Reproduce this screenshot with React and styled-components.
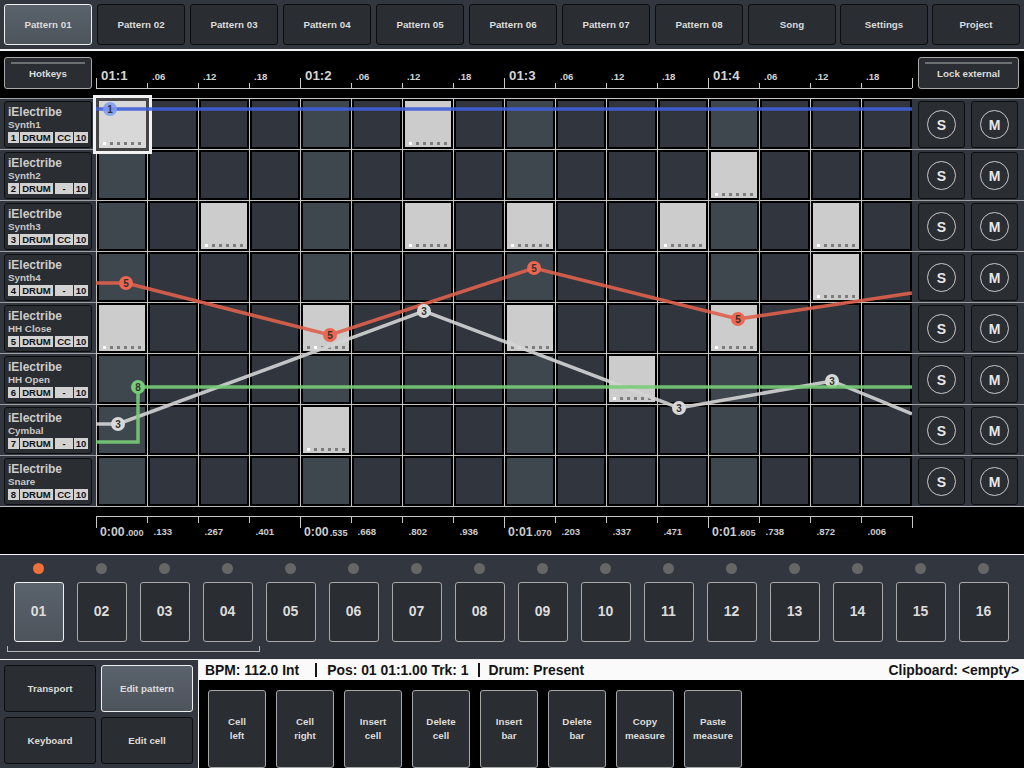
import React from "react";
import styled, { createGlobalStyle } from "styled-components";

const TRACKS = [
  { name: "Synth1", cc: "CC", filled: [0, 6] },
  { name: "Synth2", cc: "-", filled: [12] },
  { name: "Synth3", cc: "CC", filled: [2, 6, 8, 11, 14] },
  { name: "Synth4", cc: "-", filled: [14] },
  { name: "HH Close", cc: "CC", filled: [0, 4, 8, 12], shifted: [4, 8] },
  { name: "HH Open", cc: "-", filled: [10] },
  { name: "Cymbal", cc: "-", filled: [4] },
  { name: "Snare", cc: "CC", filled: [] },
];

const TABS = ["Pattern 01", "Pattern 02", "Pattern 03", "Pattern 04", "Pattern 05", "Pattern 06", "Pattern 07", "Pattern 08", "Song", "Settings", "Project"];
const TOP_TICKS = ["01:1", ".06", ".12", ".18", "01:2", ".06", ".12", ".18", "01:3", ".06", ".12", ".18", "01:4", ".06", ".12", ".18"];
const TIME_TICKS = [
  ["0:00", ".000"], ["", ".133"], ["", ".267"], ["", ".401"],
  ["0:00", ".535"], ["", ".668"], ["", ".802"], ["", ".936"],
  ["0:01", ".070"], ["", ".203"], ["", ".337"], ["", ".471"],
  ["0:01", ".605"], ["", ".738"], ["", ".872"], ["", ".006"],
];
const COMMANDS = [["Cell", "left"], ["Cell", "right"], ["Insert", "cell"], ["Delete", "cell"], ["Insert", "bar"], ["Delete", "bar"], ["Copy", "measure"], ["Paste", "measure"]];

// coordinates relative to the grid's top left corner
const CURVES = [
  { color: "#3f5fd8", points: "0,11 816,11", dots: [{ x: 14, y: 11, n: 1, fill: "#7f9bf5" }] },
  { color: "#e0604c", points: "0,185 30,185 234,237 438,170 642,221 816,195", dots: [
    { x: 30, y: 185, n: 5, fill: "#ec6650" }, { x: 234, y: 237, n: 5, fill: "#ec6650" },
    { x: 438, y: 170, n: 5, fill: "#ec6650" }, { x: 642, y: 221, n: 5, fill: "#ec6650" },
  ] },
  { color: "#d4d4d4", points: "0,326 22,326 328,213 583,310 736,283 816,316", dots: [
    { x: 22, y: 326, n: 3, fill: "#d8d8d8" }, { x: 328, y: 213, n: 3, fill: "#d8d8d8" },
    { x: 583, y: 310, n: 3, fill: "#d8d8d8" }, { x: 736, y: 283, n: 3, fill: "#d8d8d8" },
  ] },
  { color: "#78cc78", points: "0,344 42,344 42,289 816,289", dots: [{ x: 42, y: 289, n: 8, fill: "#78cc78" }] },
];

const GlobalStyle = createGlobalStyle`
  html, body {
    margin: 0;
    padding: 0;
    background: #000;
  }
  * {
    box-sizing: border-box;
  }
`;

const Page = styled.div`
  width: 1024px;
  height: 768px;
  overflow: hidden;
  display: flex;
  flex-direction: column;
  background: #000;
  font-family: "Liberation Sans", Arial, sans-serif;
  font-weight: 700;
  color: #e0e0e0;
`;

const Button = styled.div`
  display: flex;
  flex-direction: column;
  align-items: center;
  justify-content: center;
  border-radius: 3px;
  border: 1px solid ${({ $active, $outlined }) => ($active ? "#f0f0f0" : $outlined ? "#a8a8a8" : "#0c0d0e")};
  background: ${({ $active }) => ($active ? "linear-gradient(#5a626b, #4d545c)" : "#2a2d31")};
  font-size: 9.75px;
  color: #dcdcdc;
`;

const TabBar = styled.div`
  height: 49px;
  padding: 4px;
  display: flex;
  gap: 5px;
  background: #32363e;
`;

const Tab = styled(Button)`
  width: 88px;
  flex: none;
  height: 41px;
  margin-left: ${({ $tight }) => ($tight ? "-1px" : "0")};
`;

const WhiteLine = styled.div`
  height: ${({ $thin }) => ($thin ? "1px" : "2px")};
  background: #f4f4f4;
  flex: none;
`;

const RulerRow = styled.div`
  height: 47px;
  display: flex;
  flex: none;
`;

const Corner = styled.div`
  width: 96px;
  padding: 6px 4px 0;
  flex: none;
`;

const RightCorner = styled(Corner)`
  width: 112px;
  padding: 6px 5px 0 6px;
`;

const LedButton = styled(Button)`
  height: 32px;
  justify-content: flex-start;
  border-color: #a8a8a8;
  padding: 4px 6px 0;

  &::before {
    content: "";
    display: block;
    width: 100%;
    height: 2px;
    background: #6c6f73;
    margin-bottom: 4px;
  }
`;

const TopRuler = styled.div`
  width: 816px;
  height: 32px;
  margin-top: 6px;
  display: flex;
  border-bottom: 1px solid #c8c8c8;
  flex: none;
  align-items: flex-end;
`;

const TopTick = styled.div`
  width: ${({ $end }) => ($end ? "1px" : "51px")};
  flex: none;
  height: ${({ $major }) => ($major ? "10px" : "5px")};
  border-left: 1px solid #c8c8c8;
  position: relative;
`;

const TickLabel = styled.span`
  position: absolute;
  left: 4px;
  bottom: ${({ $major }) => ($major ? "5px" : "6px")};
  font-size: ${({ $major }) => ($major ? "13.3px" : "9.6px")};
  color: #d4d4d4;
  white-space: nowrap;
`;

const GridArea = styled.div`
  display: flex;
  flex: none;
  height: 409px;
  border-bottom: 1px solid #bcbcbc;
`;

const SideColumn = styled.div`
  width: ${({ $wide }) => ($wide ? "112px" : "96px")};
  flex: none;
  background: #32363e;
  display: flex;
  flex-direction: column;
`;

const SideRow = styled.div`
  height: 51px;
  flex: none;
  border-top: 1px solid #9ea0a3;
  padding: ${({ $wide }) => ($wide ? "2px 5px 2px 6px" : "2px 4px")};
  display: flex;
  gap: 6px;
`;

const TrackBox = styled.div`
  width: 88px;
  height: 47px;
  border: 1px solid #0c0d0e;
  border-radius: 3px;
  background: #2a2d31;
  padding: 4px 3px 0;
  display: flex;
  flex-direction: column;
`;

const TrackDevice = styled.div`
  font-size: 12px;
  line-height: 13px;
  color: #cccccc;
`;

const TrackName = styled.div`
  font-size: 9.8px;
  line-height: 12px;
  color: #c8c8c8;
`;

const TagRow = styled.div`
  display: flex;
  gap: 1px;
  margin-top: 1px;
`;

const Tag = styled.div`
  width: ${({ $w }) => $w}px;
  height: 11px;
  margin-left: ${({ $offset }) => $offset || 0}px;
  background: #d2d2d2;
  color: #111;
  font-size: 9.5px;
  line-height: 11px;
  text-align: center;
  flex: none;
`;

const Grid = styled.div`
  width: 816px;
  flex: none;
  position: relative;
  display: grid;
  grid-template-columns: repeat(16, 51px);
  grid-auto-rows: 51px;
  background: #000;
`;

const CellSlot = styled.div`
  border-top: 1px solid #c4c4c4;
  border-left: 1px solid #c4c4c4;
  padding: 2px;
`;

const Cell = styled.div`
  position: relative;
  height: 100%;
  background: ${({ $on, $bar }) => ($on ? "#cccccc" : $bar ? "#3e464e" : "#31363e")};
`;

const Selected = styled.div`
  position: absolute;
  left: -6px;
  top: -6px;
  width: 59px;
  height: 59px;
  border: 3px solid #f2f2f2;
  background: #d8d8d8;
  box-shadow: inset 0 0 0 3px #444;
  z-index: 1;
`;

const Dots = styled.div`
  position: absolute;
  left: ${({ $inset }) => $inset}px;
  bottom: 2px;
  display: flex;
  gap: 4px;
  z-index: 2;
`;

const Dot = styled.i`
  display: block;
  width: 3px;
  height: 3px;
  background: ${({ $on }) => ($on ? "#fff" : "#7c7c7c")};
`;

const Overlay = styled.svg`
  position: absolute;
  left: 0;
  top: 0;
  z-index: 3;
  pointer-events: none;
  font-family: "Liberation Sans", Arial, sans-serif;
`;

const RoundButton = styled(Button)`
  width: 47px;
  height: 47px;
  border-color: #0c0d0e;
`;

const Ring = styled.div`
  width: 29px;
  height: 29px;
  border-radius: 50%;
  border: 1.5px solid #c8c8c8;
  display: flex;
  align-items: center;
  justify-content: center;
  font-size: 14px;
  color: #e8e8e8;
`;

const TimeRow = styled.div`
  height: 47px;
  flex: none;
  padding: 9px 0 0 96px;
`;

const TimeRuler = styled.div`
  width: 817px;
  height: 11px;
  display: flex;
  border-top: 1px solid #c8c8c8;
`;

const TimeTick = styled.div`
  width: ${({ $end }) => ($end ? "1px" : "51px")};
  flex: none;
  height: ${({ $major }) => ($major ? "11px" : "6px")};
  border-left: 1px solid #c8c8c8;
  position: relative;
`;

const TimeLabel = styled.span`
  position: absolute;
  left: ${({ $major }) => ($major ? "3px" : "5.5px")};
  top: ${({ $major }) => ($major ? "8px" : "9px")};
  white-space: nowrap;
  font-size: ${({ $major }) => ($major ? "9.2px" : "9.6px")};
  color: #cccccc;

  b {
    font-size: 12.3px;
    margin-right: 1px;
  }
`;

const StepPanel = styled.div`
  height: 104px;
  flex: none;
  background: #32363e;
  padding: 0 14px;
  position: relative;
`;

const StepColumns = styled.div`
  display: grid;
  grid-template-columns: repeat(16, 49px);
  column-gap: 14px;
`;

const StepColumn = styled.div`
  display: flex;
  flex-direction: column;
  align-items: center;
`;

const Led = styled.div`
  width: 11px;
  height: 11px;
  margin: 8px 0;
  border-radius: 50%;
  background: ${({ $on }) => ($on ? "#f0703a" : "#666666")};
`;

const StepButton = styled(Button)`
  width: 50px;
  height: 60px;
  padding-bottom: 2px;
  font-size: 14px;
`;

const Bracket = styled.div`
  position: absolute;
  left: 7px;
  top: 91px;
  width: 253px;
  height: 6px;
  border: 1px solid #b4b4b4;
  border-top: 0;
`;

const Bottom = styled.div`
  flex: 1;
  display: flex;
  min-height: 0;
  border-top: 1px solid #f0f0f0;
`;

const ModeGrid = styled.div`
  width: 199px;
  flex: none;
  background: #32363e;
  border-right: 1px solid #f0f0f0;
  padding: 5px 5px 4px 4px;
  display: grid;
  grid-template-columns: 92px 92px;
  grid-auto-rows: 47px;
  gap: 5px;
`;

const EditPanel = styled.div`
  flex: 1;
  display: flex;
  flex-direction: column;
  min-width: 0;
`;

const StatusBar = styled.div`
  height: 20px;
  flex: none;
  background: #fafafa;
  color: #141414;
  padding: 0 5px 0 6px;
  display: flex;
  align-items: center;
  font-size: 13.9px;
`;

const StatusItem = styled.span`
  white-space: pre;
`;

const StatusDivider = styled.span`
  width: 2px;
  height: 14px;
  background: #141414;
  margin: 0 ${({ $after }) => $after}px 0 ${({ $before }) => $before}px;
`;

const Clipboard = styled(StatusItem)`
  margin-left: auto;
`;

const CommandRow = styled.div`
  display: flex;
  gap: 10px;
  padding: 10px 0 0 9px;
`;

const CommandButton = styled(Button)`
  width: 58px;
  height: 78px;
  padding-bottom: 1px;
  line-height: 14px;
`;

export default function App() {
  return (
    <Page>
      <GlobalStyle />
      <TabBar>
        {TABS.map((t, i) => (
          <Tab key={t} $active={i === 0} $tight={i > 8}>{t}</Tab>
        ))}
      </TabBar>
      <WhiteLine />
      <RulerRow>
        <Corner>
          <LedButton>Hotkeys</LedButton>
        </Corner>
        <TopRuler>
          {TOP_TICKS.map((t, i) => (
            <TopTick key={i} $major={i % 4 === 0}>
              <TickLabel $major={i % 4 === 0}>{t}</TickLabel>
            </TopTick>
          ))}
          <TopTick $major $end />
        </TopRuler>
        <RightCorner>
          <LedButton>Lock external</LedButton>
        </RightCorner>
      </RulerRow>
      <GridArea>
        <SideColumn>
          {TRACKS.map((track, i) => (
            <SideRow key={track.name}>
              <TrackBox>
                <TrackDevice>iElectribe</TrackDevice>
                <TrackName>{track.name}</TrackName>
                <TagRow>
                  <Tag $w={11}>{i + 1}</Tag>
                  <Tag $w={33}>DRUM</Tag>
                  <Tag $w={18} $offset={1}>{track.cc}</Tag>
                  <Tag $w={14}>10</Tag>
                </TagRow>
              </TrackBox>
            </SideRow>
          ))}
        </SideColumn>
        <Grid>
          {TRACKS.map((track, r) =>
            Array.from({ length: 16 }).map((_, c) => {
              const on = track.filled.includes(c);
              const selected = r === 0 && c === 0;
              const lit = track.shifted && track.shifted.includes(c) ? 1 : 0;
              return (
                <CellSlot key={`${r}-${c}`}>
                  <Cell $on={on} $bar={c % 4 === 0}>
                    {selected && <Selected />}
                    {on && (
                      <Dots $inset={4}>
                        {[0, 1, 2, 3, 4, 5].map((d) => (
                          <Dot key={d} $on={d === lit} />
                        ))}
                      </Dots>
                    )}
                  </Cell>
                </CellSlot>
              );
            })
          )}
          <Overlay width="816" height="408" viewBox="0 0 816 408">
            {CURVES.map((curve) => (
              <g key={curve.color}>
                <polyline points={curve.points} fill="none" stroke={curve.color} strokeWidth="3.5" strokeOpacity="0.9" />
                {curve.dots.map((d) => (
                  <g key={d.x}>
                    <circle cx={d.x} cy={d.y} r="7" fill={d.fill} fillOpacity={d.n === 1 ? 0.85 : 1} />
                    <text x={d.x} y={d.y + 3.5} textAnchor="middle" fontSize="10" fontWeight="700" fill="#333">
                      {d.n}
                    </text>
                  </g>
                ))}
              </g>
            ))}
          </Overlay>
        </Grid>
        <SideColumn $wide>
          {TRACKS.map((track) => (
            <SideRow key={track.name} $wide>
              <RoundButton><Ring>S</Ring></RoundButton>
              <RoundButton><Ring>M</Ring></RoundButton>
            </SideRow>
          ))}
        </SideColumn>
      </GridArea>
      <TimeRow>
        <TimeRuler>
          {TIME_TICKS.map(([major, minor], i) => (
            <TimeTick key={i} $major={i % 4 === 0}>
              <TimeLabel $major={i % 4 === 0}>
                {major && <b>{major}</b>}
                {minor}
              </TimeLabel>
            </TimeTick>
          ))}
          <TimeTick $major $end />
        </TimeRuler>
      </TimeRow>
      <WhiteLine $thin />
      <StepPanel>
        <StepColumns>
          {Array.from({ length: 16 }).map((_, i) => (
            <StepColumn key={i}>
              <Led $on={i === 0} />
              <StepButton $outlined $active={i === 0}>{String(i + 1).padStart(2, "0")}</StepButton>
            </StepColumn>
          ))}
        </StepColumns>
        <Bracket />
      </StepPanel>
      <Bottom>
        <ModeGrid>
          <Button>Transport</Button>
          <Button $active>Edit pattern</Button>
          <Button>Keyboard</Button>
          <Button>Edit cell</Button>
        </ModeGrid>
        <EditPanel>
          <StatusBar>
            <StatusItem>BPM: 112.0 Int</StatusItem>
            <StatusDivider $before={16} $after={10} />
            <StatusItem>Pos: 01 01:1.00 Trk: 1</StatusItem>
            <StatusDivider $before={9} $after={9} />
            <StatusItem>Drum: Present</StatusItem>
            <Clipboard>Clipboard: &lt;empty&gt;</Clipboard>
          </StatusBar>
          <CommandRow>
            {COMMANDS.map(([a, b]) => (
              <CommandButton key={a + b} $outlined>
                <span>{a}</span>
                <span>{b}</span>
              </CommandButton>
            ))}
          </CommandRow>
        </EditPanel>
      </Bottom>
    </Page>
  );
}
